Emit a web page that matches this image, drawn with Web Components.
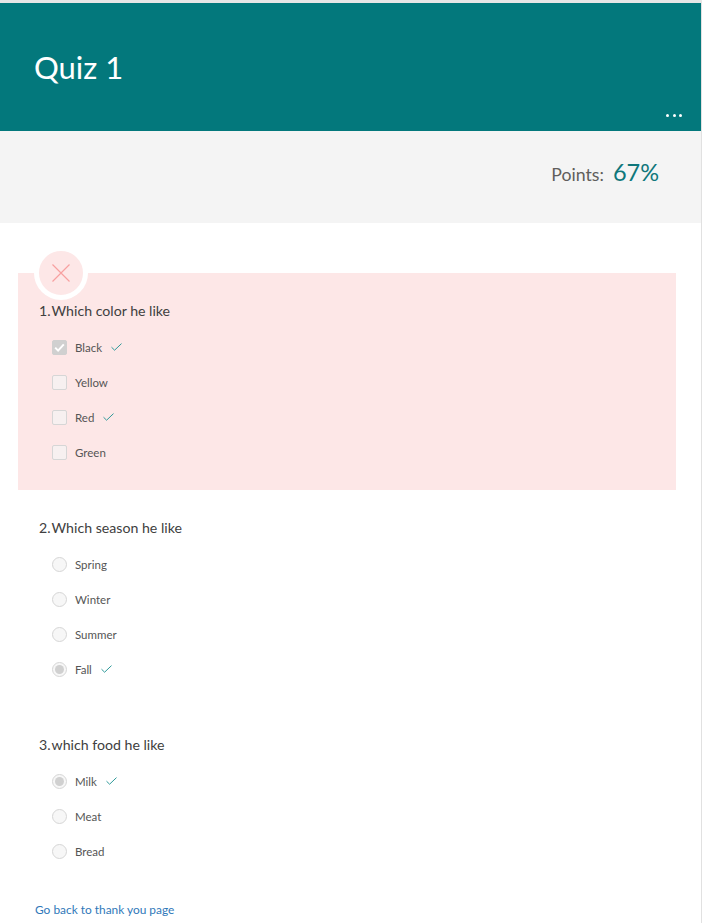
<!DOCTYPE html>
<html>
<head>
<meta charset="utf-8">
<title>Quiz 1</title>
<style>
    html, body { margin: 0; padding: 0; background: #fff; }
    body { font-family: Lato, "Open Sans", sans-serif; }
</style>
</head>
<body>
<quiz-page>
    <quiz-header slot="header" title="Quiz 1"></quiz-header>
    <quiz-score slot="score" label="Points:" value="67%"></quiz-score>

    <quiz-question number="1." text="Which color he like" wrong>
        <quiz-option type="checkbox" checked correct>Black</quiz-option>
        <quiz-option type="checkbox">Yellow</quiz-option>
        <quiz-option type="checkbox" correct>Red</quiz-option>
        <quiz-option type="checkbox">Green</quiz-option>
    </quiz-question>

    <quiz-question number="2." text="Which season he like">
        <quiz-option type="radio">Spring</quiz-option>
        <quiz-option type="radio">Winter</quiz-option>
        <quiz-option type="radio">Summer</quiz-option>
        <quiz-option type="radio" checked correct>Fall</quiz-option>
    </quiz-question>

    <quiz-question number="3." text="which food he like">
        <quiz-option type="radio" checked correct>Milk</quiz-option>
        <quiz-option type="radio">Meat</quiz-option>
        <quiz-option type="radio">Bread</quiz-option>
    </quiz-question>

    <a slot="footer" href="#">Go back to thank you page</a>
</quiz-page>

<script>
const tick = `<svg viewBox="0 0 11 8" width="11" height="8"><path d="M0.5 4.2 L3.6 7.2 L10.5 0.6" fill="none" stroke="#2f9a9a" stroke-width="1"/></svg>`;

class QuizPage extends HTMLElement {
    constructor() {
        super();
        this.attachShadow({mode: 'open'});
        this.shadowRoot.innerHTML = `
            <style>
                :host {
                    display: block;
                    width: 702px;
                    height: 923px;
                    box-sizing: border-box;
                    border-right: 1px solid #e1e1e1;
                    border-top: 3px solid #e6e6e6;
                    overflow: hidden;
                }
                .questions {
                    display: flex;
                    flex-direction: column;
                    padding: 50px 25px 0 18px;
                }
                .footer {
                    padding: 0 0 0 35px;
                    margin-top: 11px;
                    line-height: 16px;
                }
                ::slotted(a) {
                    font-size: 11.9px;
                    line-height: 16px;
                    color: #2f78b9;
                    text-decoration: none;
                }
            </style>
            <slot name="header"></slot>
            <slot name="score"></slot>
            <div class="questions"><slot></slot></div>
            <div class="footer"><slot name="footer"></slot></div>
        `;
    }
}

class QuizHeader extends HTMLElement {
    constructor() {
        super();
        this.attachShadow({mode: 'open'});
        this.shadowRoot.innerHTML = `
            <style>
                :host {
                    display: block;
                    position: relative;
                    height: 128px;
                    background: #03787c;
                    color: #fff;
                }
                h1 {
                    margin: 0;
                    padding: 42px 0 0 34px;
                    font-size: 31px;
                    line-height: 44px;
                    font-weight: 400;
                }
                .more {
                    position: absolute;
                    right: 19px;
                    bottom: 14px;
                    display: flex;
                    gap: 3.5px;
                }
                .more i {
                    width: 3px;
                    height: 3px;
                    border-radius: 50%;
                    background: #fff;
                }
            </style>
            <h1></h1>
            <div class="more"><i></i><i></i><i></i></div>
        `;
        this.shadowRoot.querySelector('h1').textContent = this.getAttribute('title');
    }
}

class QuizScore extends HTMLElement {
    constructor() {
        super();
        this.attachShadow({mode: 'open'});
        this.shadowRoot.innerHTML = `
            <style>
                :host {
                    display: flex;
                    justify-content: flex-end;
                    align-items: baseline;
                    gap: 9px;
                    height: 92px;
                    box-sizing: border-box;
                    padding: 23px 42px 0 0;
                    background: #f4f4f4;
                }
                .label { font-size: 17.7px; color: #605e5c; }
                .value { font-size: 23.5px; color: #0f777b; line-height: 36px; }
            </style>
            <span class="label"></span>
            <span class="value"></span>
        `;
        this.shadowRoot.querySelector('.label').textContent = this.getAttribute('label');
        this.shadowRoot.querySelector('.value').textContent = this.getAttribute('value');
    }
}

class QuizQuestion extends HTMLElement {
    constructor() {
        super();
        this.attachShadow({mode: 'open'});
        this.shadowRoot.innerHTML = `
            <style>
                :host {
                    display: block;
                    position: relative;
                    box-sizing: border-box;
                    padding: 28px 0 20px 21px;
                    color: #404040;
                }
                .title {
                    display: flex;
                    gap: 1px;
                    font-size: 14.15px;
                    line-height: 20px;
                    margin-bottom: 9px;
                }
                .options { display: flex; flex-direction: column; padding-left: 13px; }
                .badge {
                    display: none;
                    position: absolute;
                    left: 16px;
                    top: -27px;
                    width: 44px;
                    height: 44px;
                    border: 5px solid #fff;
                    border-radius: 50%;
                    background: #fde7e7;
                    align-items: center;
                    justify-content: center;
                }
                :host([wrong]) { background: #fde7e7; }
                :host([wrong]) .badge { display: flex; }
            </style>
            <div class="badge">
                <svg viewBox="0 0 18 18" width="18" height="18"><path d="M0.5 0.5 L17.5 17.5 M17.5 0.5 L0.5 17.5" fill="none" stroke="#f7a0a0" stroke-width="1.2"/></svg>
            </div>
            <div class="title"><span class="num"></span><span class="text"></span></div>
            <div class="options"><slot></slot></div>
        `;
        this.shadowRoot.querySelector('.num').textContent = this.getAttribute('number');
        this.shadowRoot.querySelector('.text').textContent = this.getAttribute('text');
    }
}

class QuizOption extends HTMLElement {
    constructor() {
        super();
        this.attachShadow({mode: 'open'});
        const isRadio = this.getAttribute('type') === 'radio';
        const checked = this.hasAttribute('checked');
        let mark = '';
        if (checked && isRadio) mark = '<i class="dot"></i>';
        if (checked && !isRadio) mark = '<svg viewBox="0 0 15 15" width="15" height="15"><path d="M3.2 7.6 L6.1 10.6 L11.8 4.4" fill="none" stroke="#fff" stroke-width="2"/></svg>';
        this.shadowRoot.innerHTML = `
            <style>
                :host {
                    display: flex;
                    align-items: center;
                    height: 35px;
                    font-size: 11.5px;
                    color: #555;
                }
                .box {
                    display: flex;
                    align-items: center;
                    justify-content: center;
                    flex: none;
                    width: 15px;
                    height: 15px;
                    box-sizing: border-box;
                    border: 1px solid #d6d6d6;
                    background: rgba(244, 244, 244, .7);
                    margin-right: 8px;
                }
                .box.check { border-radius: 2px; }
                .box.radio { border-radius: 50%; }
                .box.check.on { background: #d0d0d0; border-color: #d0d0d0; }
                .box svg { flex: none; margin: -1px; }
                .dot { width: 9px; height: 9px; border-radius: 50%; background: #d0d0d0; }
                .tick { display: flex; margin-left: 9px; margin-top: -2px; }
            </style>
            <span class="box ${isRadio ? 'radio' : 'check'} ${checked ? 'on' : ''}">${mark}</span>
            <span class="label"><slot></slot></span>
            ${this.hasAttribute('correct') ? `<span class="tick">${tick}</span>` : ''}
        `;
    }
}

customElements.define('quiz-page', QuizPage);
customElements.define('quiz-header', QuizHeader);
customElements.define('quiz-score', QuizScore);
customElements.define('quiz-question', QuizQuestion);
customElements.define('quiz-option', QuizOption);
</script>
</body>
</html>
